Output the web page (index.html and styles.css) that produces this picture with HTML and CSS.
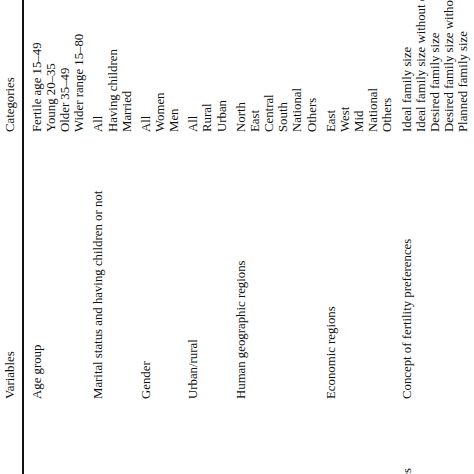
FILE: index.html
```html
<!DOCTYPE html>
<html lang="en">
<head>
<meta charset="utf-8">
<title>Variables and categories</title>
<link rel="stylesheet" href="styles.css">
</head>
<body>
<div class="page">
  <div class="table">
    <div class="row head">
      <div class="c0"></div>
      <div class="c1">Variables</div>
      <div class="c2">Categories</div>
    </div>
    <div class="rule"></div>
    <div class="tbody">
      <div class="row group">
        <div class="c0"></div>
        <div class="c1">Age group</div>
        <div class="c2">
          <div>Fertile age 15–49</div>
          <div>Young 20–35</div>
          <div>Older 35–49</div>
          <div>Wider range 15–80</div>
        </div>
      </div>
      <div class="row group">
        <div class="c0"></div>
        <div class="c1">Marital status and having children or not</div>
        <div class="c2">
          <div>All</div>
          <div>Having children</div>
          <div>Married</div>
        </div>
      </div>
      <div class="row group">
        <div class="c0"></div>
        <div class="c1">Gender</div>
        <div class="c2">
          <div>All</div>
          <div>Women</div>
          <div>Men</div>
        </div>
      </div>
      <div class="row group">
        <div class="c0"></div>
        <div class="c1">Urban/rural</div>
        <div class="c2">
          <div>All</div>
          <div>Rural</div>
          <div>Urban</div>
        </div>
      </div>
      <div class="row group">
        <div class="c0"></div>
        <div class="c1">Human geographic regions</div>
        <div class="c2">
          <div>North</div>
          <div>East</div>
          <div>Central</div>
          <div>South</div>
          <div>National</div>
          <div>Others</div>
        </div>
      </div>
      <div class="row group">
        <div class="c0"></div>
        <div class="c1">Economic regions</div>
        <div class="c2">
          <div>East</div>
          <div>West</div>
          <div>Mid</div>
          <div>National</div>
          <div>Others</div>
        </div>
      </div>
      <div class="row group">
        <div class="c0 cut">Fertility preferences</div>
        <div class="c1">Concept of fertility preferences</div>
        <div class="c2">
          <div>Ideal family size</div>
          <div>Ideal family size without considering policy</div>
          <div>Desired family size</div>
          <div>Desired family size without considering policy</div>
          <div>Planned family size</div>
        </div>
      </div>
    </div>
  </div>
</div>
</body>
</html>
```
FILE: styles.css
```css
html, body {
  margin: 0;
  padding: 0;
  background: #ffffff;
}
body {
  width: 474px;
  height: 474px;
  overflow: hidden;
}
.page {
  width: 474px;
  height: 474px;
  overflow: hidden;
  transform: rotate(-90deg);
  background: #ffffff;
}
.table {
  width: 1000px;
  margin-left: -200px;
  font-family: "Liberation Serif", "Times New Roman", serif;
  font-size: 12.8px;
  line-height: 14.15px;
  color: #111111;
  white-space: nowrap;
}
.row {
  display: grid;
  grid-template-columns: 275px 267px 1fr;
}
.head {
  padding-top: 3px;
}
.rule {
  margin-top: 5px;
  height: 2px;
  background: #111111;
}
.tbody {
  padding-top: 5.6px;
  display: flex;
  flex-direction: column;
  gap: 5px;
}
.cut {
  text-align: right;
  padding-right: 69px;
}
```
